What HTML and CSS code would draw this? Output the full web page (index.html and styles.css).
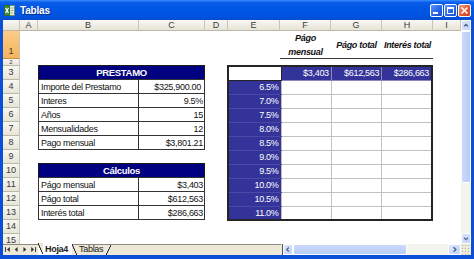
FILE: index.html
```html
<!DOCTYPE html>
<html lang="es">
<head>
<meta charset="UTF-8" />
<title>Tablas</title>
<link rel="stylesheet" href="styles.css">
</head>
<body>
  <div class="window">
    <div class="titlebar">
      <svg class="app-icon" width="11" height="11" viewBox="0 0 11 11">
        <rect x="0.5" y="0.5" width="10" height="10" fill="#e9efe6" stroke="#6b8f6b"/>
        <rect x="0.5" y="0.5" width="5" height="10" fill="#3f8f3f" stroke="#2d6b2d"/>
        <path d="M1.5 3 L4.5 8 M4.5 3 L1.5 8" stroke="#fff" stroke-width="1.2"/>
        <path d="M6.5 3 H9.5 M6.5 5.5 H9.5 M6.5 8 H9.5" stroke="#8aa88a" stroke-width="1"/>
      </svg>
      <span class="title">Tablas</span>
      <div class="controls">
        <span class="wbtn">
          <svg width="13" height="13" viewBox="0 0 13 13"><rect x="3" y="8" width="5" height="2" fill="#fff"/></svg>
        </span>
        <span class="wbtn">
          <svg width="13" height="13" viewBox="0 0 13 13"><rect x="3.5" y="3.5" width="6" height="6" fill="none" stroke="#fff"/><rect x="3" y="3" width="7" height="2" fill="#fff"/></svg>
        </span>
        <span class="wbtn close">
          <svg width="13" height="13" viewBox="0 0 13 13"><path d="M3.5 3.5 L9.5 9.5 M9.5 3.5 L3.5 9.5" stroke="#fff" stroke-width="1.6"/></svg>
        </span>
      </div>
    </div>

    <div class="main">
      <div class="sheet">
        <div class="corner"></div>
        <div class="ch">A</div>
        <div class="ch">B</div>
        <div class="ch">C</div>
        <div class="ch">D</div>
        <div class="ch">E</div>
        <div class="ch">F</div>
        <div class="ch">G</div>
        <div class="ch">H</div>
        <div class="ch">I</div>

        <div class="rh selected">1</div>
        <div class="rh short">2</div>
        <div class="rh">3</div>
        <div class="rh">4</div>
        <div class="rh">5</div>
        <div class="rh">6</div>
        <div class="rh">7</div>
        <div class="rh">8</div>
        <div class="rh">9</div>
        <div class="rh">10</div>
        <div class="rh">11</div>
        <div class="rh">12</div>
        <div class="rh">13</div>
        <div class="rh">14</div>
        <div class="rh">15</div>

        <div class="col-titles">
          <div>Págo<br>mensual</div>
          <div>Págo total</div>
          <div>Interés total</div>
        </div>

        <table class="box loan">
          <colgroup><col class="w-label"><col class="w-value"></colgroup>
          <tr><th colspan="2">PRESTAMO</th></tr>
          <tr><td>Importe del Prestamo</td><td class="num acct">$325,900.00</td></tr>
          <tr><td>Interes</td><td class="num">9.5%</td></tr>
          <tr><td>Años</td><td class="num">15</td></tr>
          <tr><td>Mensualidades</td><td class="num">12</td></tr>
          <tr><td>Pago mensual</td><td class="num">$3,801.21</td></tr>
        </table>

        <table class="box calc">
          <colgroup><col class="w-label"><col class="w-value"></colgroup>
          <tr><th colspan="2">Cálculos</th></tr>
          <tr><td>Págo mensual</td><td class="num">$3,403</td></tr>
          <tr><td>Págo total</td><td class="num">$612,563</td></tr>
          <tr><td>Interés total</td><td class="num">$286,663</td></tr>
        </table>

        <table class="rates">
          <tr class="totals"><td class="blank"></td><td>$3,403</td><td>$612,563</td><td>$286,663</td></tr>
          <tr><td class="rate">6.5%</td><td></td><td></td><td></td></tr>
          <tr><td class="rate">7.0%</td><td></td><td></td><td></td></tr>
          <tr><td class="rate">7.5%</td><td></td><td></td><td></td></tr>
          <tr><td class="rate">8.0%</td><td></td><td></td><td></td></tr>
          <tr><td class="rate">8.5%</td><td></td><td></td><td></td></tr>
          <tr><td class="rate">9.0%</td><td></td><td></td><td></td></tr>
          <tr><td class="rate">9.5%</td><td></td><td></td><td></td></tr>
          <tr><td class="rate">10.0%</td><td></td><td></td><td></td></tr>
          <tr><td class="rate">10.5%</td><td></td><td></td><td></td></tr>
          <tr><td class="rate">11.0%</td><td></td><td></td><td></td></tr>
        </table>
      </div>

      <div class="vscroll">
        <span class="sbtn">
          <svg width="10" height="11" viewBox="0 0 10 11"><path d="M2.5 6.5 L5 4 L7.5 6.5" fill="none" stroke="#4d6185" stroke-width="1.5"/></svg>
        </span>
        <span class="vthumb"></span>
        <span class="vtrack"></span>
        <span class="sbtn">
          <svg width="10" height="11" viewBox="0 0 10 11"><path d="M2.5 4.5 L5 7 L7.5 4.5" fill="none" stroke="#4d6185" stroke-width="1.5"/></svg>
        </span>
      </div>
    </div>

    <div class="bottom">
      <div class="tabbar">
        <div class="nav">
          <svg width="36" height="11" viewBox="0 0 36 11">
            <rect x="2" y="3" width="1" height="5" fill="#333"/>
            <path d="M7 3 L4 5.5 L7 8 Z" fill="#333"/>
            <path d="M15 3 L12 5.5 L15 8 Z" fill="#333"/>
            <path d="M21 3 L24 5.5 L21 8 Z" fill="#333"/>
            <path d="M29 3 L32 5.5 L29 8 Z" fill="#333"/>
            <rect x="33" y="3" width="1" height="5" fill="#333"/>
          </svg>
        </div>
        <div class="tab active">Hoja4</div>
        <div class="tab">Tablas</div>
        <span class="tab-end"></span>
      </div>
      <div class="hscroll">
        <span class="split"></span>
        <span class="sbtn">
          <svg width="10" height="11" viewBox="0 0 10 11"><path d="M6 3 L3.5 5.5 L6 8" fill="none" stroke="#4d6185" stroke-width="1.5"/></svg>
        </span>
        <span class="hthumb"></span>
        <span class="htrack"></span>
        <span class="sbtn">
          <svg width="12" height="11" viewBox="0 0 12 11"><path d="M5 3 L7.5 5.5 L5 8" fill="none" stroke="#4d6185" stroke-width="1.5"/></svg>
        </span>
      </div>
      <div class="grip"></div>
    </div>
  </div>
</body>
</html>
```

FILE: styles.css
```css
/* Excel 2003 window, XP Luna theme */
* {
  box-sizing: border-box;
}
body {
  margin: 0;
  width: 474px;
  height: 259px;
  overflow: hidden;
  font-family: 'Liberation Sans', Arial, sans-serif;
}

.window {
  width: 474px;
  height: 259px;
  background: #0a4fd6;
  display: flex;
  flex-direction: column;
}

/* title bar */
.titlebar {
  height: 20px;
  flex: none;
  display: flex;
  align-items: center;
  padding: 0 3px 0 4px;
  background: linear-gradient(#3a8cff 0%, #0a5ee9 12%, #0056e4 45%, #0052de 85%, #0a4ccc 100%);
  color: #fff;
}
.app-icon {
  margin-top: 1px;
}
.title {
  margin-left: 5px;
  font-size: 10px;
  font-weight: bold;
  letter-spacing: -0.2px;
  text-shadow: 1px 1px 0 #0a2e8c;
}
.controls {
  margin-left: auto;
  display: flex;
  gap: 1px;
}
.wbtn {
  width: 13px;
  height: 13px;
  border: 1px solid #fff;
  border-radius: 2px;
  background: linear-gradient(135deg, #5d95ff, #2762e6 60%, #1d4fcf);
  display: flex;
  align-items: center;
  justify-content: center;
}
.wbtn svg {
  margin: -1px;
}
.wbtn.close {
  background: linear-gradient(135deg, #f0a083, #e3582f 55%, #cc4420);
}

/* worksheet area */
.main {
  height: 224px;
  flex: none;
  display: flex;
  margin: 0 3px;
}
.sheet {
  width: 458px;
  height: 224px;
  overflow: hidden;
  background: #fff;
  display: grid;
  grid-template-columns: 17px 18px 101px 66px 23px 52px 51px 51px 51px 28px;
  grid-template-rows: 11px 28px 7px repeat(13, 14px);
}

.corner,
.ch,
.rh {
  background: linear-gradient(#f8f7f2, #e7e4d7);
  border-right: 1px solid #c9c5b5;
  border-bottom: 1px solid #bdb9a8;
  color: #3a3a3a;
  font-size: 9px;
}
.ch {
  text-align: center;
  line-height: 10px;
}
.rh {
  grid-column: 1;
  display: flex;
  align-items: flex-end;
  justify-content: center;
  line-height: 13px;
  overflow: hidden;
}
.rh.short {
  align-items: flex-start;
  font-size: 6px;
  line-height: 6px;
}
.rh.selected {
  background: linear-gradient(#fbcb86, #f6b55c);
  border-bottom-color: #c98f3c;
}

/* headings above the rate table */
.col-titles {
  grid-column: 7 / 10;
  grid-row: 2;
  display: grid;
  grid-template-columns: repeat(3, 1fr);
  align-items: center;
  border-bottom: 1px solid #3a3a3a;
  font-size: 9px;
  font-weight: bold;
  font-style: italic;
  letter-spacing: -0.3px;
  line-height: 14px;
  text-align: center;
  color: #111;
}

/* small boxed tables */
table {
  border-collapse: collapse;
  font-size: 9px;
  letter-spacing: -0.3px;
  align-self: start;
}
.box {
  grid-column: 3 / 5;
  width: 167px;
  border: 1px solid #1a1a1a;
  margin-top: -1px;
}
.loan {
  grid-row: 4 / 10;
}
.calc {
  grid-row: 11 / 15;
}
.w-label {
  width: 101px;
}
.w-value {
  width: 66px;
}
.box th {
  height: 14px;
  padding: 0;
  background: #000080;
  color: #fff;
  font-weight: bold;
  font-size: 9.5px;
}
.box td {
  height: 14px;
  padding: 0 2px;
  border: 1px solid #333;
  color: #111;
  white-space: nowrap;
}
.box td.num {
  text-align: right;
  padding-right: 1px;
}
.box td.acct {
  padding-right: 3px;
}

/* rate table */
.rates {
  grid-column: 6 / 10;
  grid-row: 4 / 15;
  width: 206px;
  margin: -1px 0 0 -1px;
  border: 2px solid #242424;
  table-layout: fixed;
}
.rates td {
  height: 14px;
  padding: 0 2px;
  border: 1px solid #c0c0c0;
  text-align: right;
}
.rates td:first-child {
  width: 53px;
}
.rates .totals td {
  background: #333399;
  color: #fff;
  border-color: #8a8ab8;
}
.rates .totals td.blank {
  background: #fff;
  border-color: #242424;
}
.rates td.rate {
  background: #333399;
  color: #fff;
  border-color: #4a4aa6;
  border-right-color: #c0c0c0;
}

/* vertical scroll bar */
.vscroll {
  width: 10px;
  display: flex;
  flex-direction: column;
  background: #f3f2ec;
}
.sbtn {
  flex: none;
  height: 11px;
  display: flex;
  align-items: center;
  justify-content: center;
  background: linear-gradient(135deg, #dbe5fd, #c1d2fb);
  border: 1px solid #fff;
  border-radius: 2px;
}
.vthumb {
  height: 152px;
  background: linear-gradient(90deg, #cbd9fc, #b9cbf6);
  border: 1px solid #fff;
  border-radius: 2px;
}
.vtrack {
  flex: 1;
  background: #f4f4ef;
}

/* sheet tabs and horizontal scroll bar */
.bottom {
  height: 11px;
  flex: none;
  margin: 0 3px;
  display: flex;
  background: #ece9d8;
}
.tabbar {
  width: 278px;
  display: flex;
  align-items: stretch;
  border-top: 1px solid #8c8a80;
  font-size: 9px;
  letter-spacing: -0.3px;
}
.nav {
  width: 35px;
  display: flex;
  align-items: center;
}
.nav svg {
  margin-top: -1px;
}
.tab {
  position: relative;
  padding: 0 4px 0 7px;
  line-height: 9px;
  color: #222;
}
.tab::before {
  content: '';
  position: absolute;
  left: 0;
  top: -1px;
  width: 5px;
  height: 11px;
  background: linear-gradient(to bottom left, transparent 44%, #333 47%, #333 55%, transparent 58%);
}
.tab.active {
  margin-top: -1px;
  padding-top: 1px;
  background: #fff;
  font-weight: bold;
}
.tab.active::before {
  background: linear-gradient(to bottom left, #ece9d8 44%, #333 47%, #333 55%, transparent 58%);
}
.tab-end {
  width: 5px;
  background: linear-gradient(to bottom right, transparent 44%, #333 47%, #333 55%, transparent 58%);
}
.tab + .tab-end {
  margin-left: -1px;
}
.hscroll {
  width: 180px;
  display: flex;
  background: #f4f4ef;
}
.split {
  width: 2px;
  background: #ece9d8;
  border-right: 1px solid #555;
}
.hscroll .sbtn {
  height: 11px;
  width: 10px;
}
.hscroll .sbtn:last-child {
  width: 13px;
}
.hthumb {
  width: 114px;
  background: linear-gradient(#cbd9fc, #b9cbf6);
  border: 1px solid #fff;
  border-radius: 2px;
}
.htrack {
  flex: 1;
}
.grip {
  width: 10px;
  background: radial-gradient(circle, #b8b4a2 35%, transparent 40%) 0 0 / 3px 3px, #ece9d8;
}
```
